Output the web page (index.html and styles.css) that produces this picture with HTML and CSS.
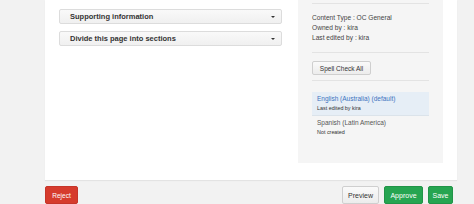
FILE: index.html
```html
<!DOCTYPE html>
<html>
<head>
<meta charset="utf-8">
<link rel="stylesheet" href="styles.css">
</head>
<body>
<div class="page">
  <div class="main">
    <div class="strip"></div>
    <div class="panel">
      <div class="fields">
        <div class="dropdown"><span>Supporting information</span><span class="caret"></span></div>
        <div class="dropdown"><span>Divide this page into sections</span><span class="caret"></span></div>
      </div>
      <div class="sidebar">
        <div class="section meta">
          <div>Content Type : OC General</div>
          <div>Owned by : kira</div>
          <div>Last edited by : kira</div>
        </div>
        <div class="section spell">
          <button class="btn-spell">Spell Check All</button>
        </div>
        <div class="section langs">
          <div class="lang active">
            <div class="lang-name">English (Australia) (default)</div>
            <div class="lang-sub">Last edited by kira</div>
          </div>
          <div class="lang">
            <div class="lang-name">Spanish (Latin America)</div>
            <div class="lang-sub">Not created</div>
          </div>
        </div>
      </div>
    </div>
  </div>
  <div class="actions">
    <button class="btn btn-reject">Reject</button>
    <div class="right-actions">
      <button class="btn btn-preview">Preview</button>
      <button class="btn btn-approve">Approve</button>
      <button class="btn btn-save">Save</button>
    </div>
  </div>
</div>
</body>
</html>
```
FILE: styles.css
```css
html, body {
  margin: 0;
  padding: 0;
  background: #f2f2f2;
  font-family: "Liberation Sans", Arial, sans-serif;
  font-size: 7px;
  color: #333;
  overflow: hidden;
}
.page {
  width: 474px;
  height: 204px;
  display: flex;
  flex-direction: column;
}
.main {
  display: flex;
  height: 182px;
}
.strip {
  width: 45px;
  background: #f2f2f2;
}
.panel {
  width: 412px;
  background: #fff;
  display: flex;
  box-shadow: 0 1px 1px rgba(0,0,0,0.06);
}
.fields {
  width: 223px;
  margin-left: 14px;
  padding-top: 9px;
  display: flex;
  flex-direction: column;
  gap: 7px;
}
.dropdown {
  height: 13px;
  border: 1px solid #dcdcdc;
  border-radius: 2px;
  background: linear-gradient(#f9f9f9, #f0f0f0);
  display: flex;
  align-items: center;
  justify-content: space-between;
  padding: 0 6px 0 10px;
  font-weight: bold;
  font-size: 7.5px;
  color: #333;
}
.caret {
  width: 0;
  height: 0;
  border-left: 2px solid transparent;
  border-right: 2px solid transparent;
  border-top: 2px solid #333;
}
.sidebar {
  width: 117px;
  margin-left: 16px;
  height: 160px;
  padding: 3px 14px 0;
  background: #f5f5f5;
  color: #444;
  font-size: 6.6px;
}
.section {
  border-top: 1px solid #e3e3e3;
}
.meta {
  padding: 9px 0 9px;
  line-height: 10px;
}
.spell {
  padding: 8px 0 5px;
}
.btn-spell {
  font-family: inherit;
  font-size: 6.5px;
  color: #333;
  width: 59px;
  height: 14px;
  padding: 0;
  border: 1px solid #cfcfcf;
  border-radius: 2px;
  background: linear-gradient(#fafafa, #ececec);
}
.langs {
  padding-top: 11px;
}
.lang {
  height: 24px;
  padding: 2px 0 0 5px;
  box-sizing: border-box;
}
.lang.active {
  background: #e6eef6;
  border-bottom: 1px solid #dbe3ea;
}
.lang-name {
  line-height: 10px;
  font-size: 6.5px;
  color: #555;
}
.lang.active .lang-name {
  color: #3d72c0;
}
.lang-sub {
  font-size: 5.4px;
  line-height: 9px;
  color: #333;
}
.actions {
  flex: 1;
  display: flex;
  justify-content: space-between;
  padding: 6px 21px 0 45px;
}
.right-actions {
  display: flex;
  gap: 5px;
}
.btn {
  font-family: inherit;
  font-size: 7px;
  height: 18px;
  padding: 0;
  border-radius: 2px;
  border: 1px solid transparent;
  color: #fff;
}
.btn-reject {
  width: 33px;
  background: #d63b2d;
  border-color: #c5352a;
  font-size: 6.5px;
}
.btn-preview {
  width: 37px;
  background: linear-gradient(#fafafa, #ececec);
  border-color: #cfcfcf;
  color: #333;
}
.btn-approve {
  width: 39px;
  background: #26a551;
  border-color: #219448;
}
.btn-save {
  width: 25px;
  background: #26a551;
  border-color: #219448;
}
```
